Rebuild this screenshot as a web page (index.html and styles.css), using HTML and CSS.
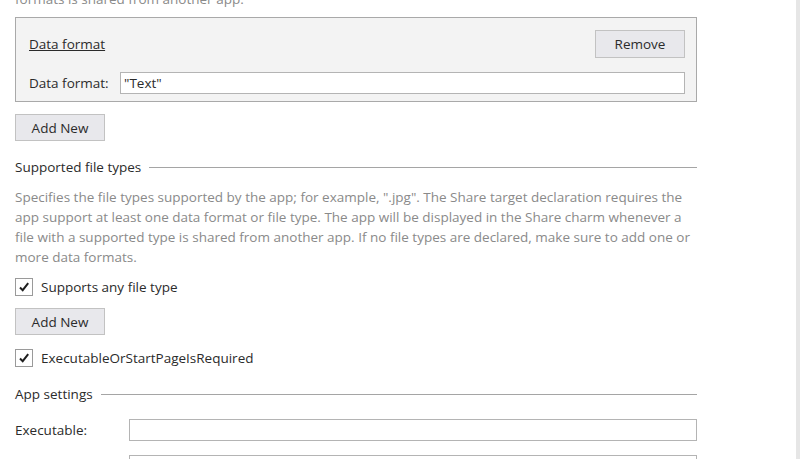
FILE: index.html
```html
<!DOCTYPE HTML>
<html>
<head>
  <meta charset="utf-8">
  <title>Declarations</title>
  <link rel="stylesheet" href="styles.css">
</head>
<body>
<div class="page">
  <div class="content">
    <p class="desc cut">formats is shared from another app.</p>

    <div class="item-box">
      <div class="item-head">
        <a class="item-title" href="#">Data format</a>
        <button class="btn">Remove</button>
      </div>
      <div class="item-row">
        <label class="item-label">Data format:</label>
        <input class="field" type="text" value="&quot;Text&quot;">
      </div>
    </div>

    <button class="btn add">Add New</button>

    <h3 class="group">Supported file types</h3>
    <p class="desc">Specifies the file types supported by the app; for example, ".jpg". The Share target declaration requires the app support at least one data format or file type. The app will be displayed in the Share charm whenever a file with a supported type is shared from another app. If no file types are declared, make sure to add one or more data formats.</p>

    <div class="check">
      <span class="box">
        <svg width="12" height="12" viewBox="0 0 12 12"><path d="M2 6.5 L4.7 9.2 L10.2 2.2" fill="none" stroke="#1e1e1e" stroke-width="2"/></svg>
      </span>
      <span>Supports any file type</span>
    </div>

    <button class="btn add">Add New</button>

    <div class="check">
      <span class="box">
        <svg width="12" height="12" viewBox="0 0 12 12"><path d="M2 6.5 L4.7 9.2 L10.2 2.2" fill="none" stroke="#1e1e1e" stroke-width="2"/></svg>
      </span>
      <span>ExecutableOrStartPageIsRequired</span>
    </div>

    <h3 class="group">App settings</h3>
    <div class="setting">
      <label class="set-label">Executable:</label>
      <input class="field" type="text" value="">
    </div>
    <div class="setting">
      <label class="set-label">&nbsp;</label>
      <input class="field" type="text" value="">
    </div>
  </div>
  <div class="scrollbar"></div>
</div>
</body>
</html>
```

FILE: styles.css
```css
/*base*/
body{margin:0;padding:0;background:#fff;overflow:hidden;}
*{box-sizing:border-box;}
body,button,input{
	font-family:"Open Sans","Noto Sans",sans-serif;
	font-size:13.5px;
	color:#2b2b2b;
}

/*layout*/
.page{
	display:flex;
	height:459px;
	overflow:hidden;
}
.content{
	width:697px;
	padding-left:15px;
}
.scrollbar{
	margin-left:auto;
	width:4px;
	background:#e6e6e6;
}

/*description text*/
.desc{
	margin:0;
	color:#8a8a8a;
	line-height:20px;
}
.desc.cut{
	margin-top:-11px;
}

/*item box*/
.item-box{
	margin-top:8px;
	border:1px solid #a9a9a9;
	background:#f3f3f3;
	padding:12px 11px 7px 13px;
}
.item-head{
	display:flex;
	align-items:center;
	justify-content:space-between;
}
.item-title{
	color:#2b2b2b;
	text-decoration:underline;
}
.item-row{
	display:flex;
	align-items:center;
	margin-top:14px;
}
.item-label{
	flex-shrink:0;
	white-space:nowrap;
	width:91px;
}
.field{
	flex:1;
	min-width:0;
	height:22px;
	border:1px solid #b4b4b4;
	background:#fff;
	padding:0 3px;
	outline:none;
}

/*buttons*/
.btn{
	flex-shrink:0;
	width:90px;
	height:28px;
	border:1px solid #c2c2c2;
	background:#e8e8ec;
	padding:0;
	cursor:pointer;
}
.btn.add{
	display:block;
	height:27px;
	margin-top:12px;
}

/*group heading with line*/
.group{
	display:flex;
	align-items:center;
	margin:0;
	font-weight:normal;
	font-size:13.5px;
	height:20px;
	white-space:nowrap;
}
.group::after{
	content:"";
	flex:1;
	margin-left:8px;
	border-top:1px solid #a5a5a5;
}
.btn.add + .group{margin-top:16px;}
.group + .desc{margin-top:10px;}

/*checkbox*/
.check{
	display:flex;
	align-items:center;
	margin-top:11px;
	height:18px;
}
.box{
	display:flex;
	align-items:center;
	justify-content:center;
	width:18px;
	height:18px;
	border:1px solid #9a9a9a;
	background:#fff;
	margin-right:8px;
}
.btn.add + .check{margin-top:14px;}
.check + .group{margin-top:17px;}

/*app settings*/
.setting{
	display:flex;
	align-items:center;
	margin-top:15px;
}
.setting + .setting{margin-top:14px;}
.set-label{
	flex-shrink:0;
	width:114px;
}
```
